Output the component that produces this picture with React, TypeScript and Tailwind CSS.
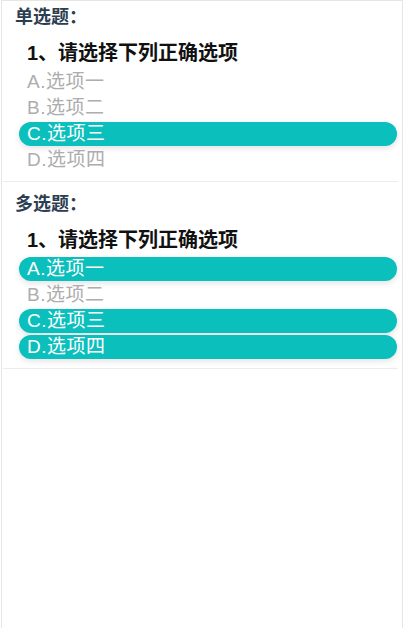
import React from "react";

type Opt = { label: string; selected: boolean };

const font = { fontFamily: '"Liberation Sans", "Noto Sans CJK SC", sans-serif' };

function Section({ title, opts, first }: { title: string; opts: Opt[]; first?: boolean }) {
  return (
    <div className={`ml-[1px] mr-[4px] border-b border-[#ececec] pb-[9px] ${first ? "pt-[4px]" : "pt-[10px]"}`}>
      <div className="pl-[12px] h-[24px] leading-[24px] text-[18px] font-bold text-[#2c3e50]">{title}</div>
      <div className="mt-[11px] pl-[24px] h-[26px] leading-[26px] text-[20px] font-bold text-[#111]">1、请选择下列正确选项</div>
      <div className="mt-[4px] ml-[16px] mr-[1px] flex flex-col gap-[2px]">
        {opts.map((o) => (
          <div
            key={o.label}
            className={
              o.selected
                ? "h-[24px] leading-[24px] rounded-full bg-[#0bbfbd] pl-[8px] text-[19px] tracking-[0.5px] text-white shadow-[0_2px_6px_rgba(0,0,0,0.12)]"
                : "h-[24px] leading-[24px] pl-[8px] text-[19px] tracking-[0.5px] text-[#adadad]"
            }
          >
            {o.label}
          </div>
        ))}
      </div>
    </div>
  );
}

export default function App() {
  return (
    <div style={font} className="bg-white w-[405px] h-[628px]">
      <div className="ml-[1px] w-[402px] h-[628px] border-x border-t border-[#e6e6e6] bg-white">
        <Section
          first
          title="单选题："
          opts={[
            { label: "A.选项一", selected: false },
            { label: "B.选项二", selected: false },
            { label: "C.选项三", selected: true },
            { label: "D.选项四", selected: false },
          ]}
        />
        <Section
          title="多选题："
          opts={[
            { label: "A.选项一", selected: true },
            { label: "B.选项二", selected: false },
            { label: "C.选项三", selected: true },
            { label: "D.选项四", selected: true },
          ]}
        />
      </div>
    </div>
  );
}
